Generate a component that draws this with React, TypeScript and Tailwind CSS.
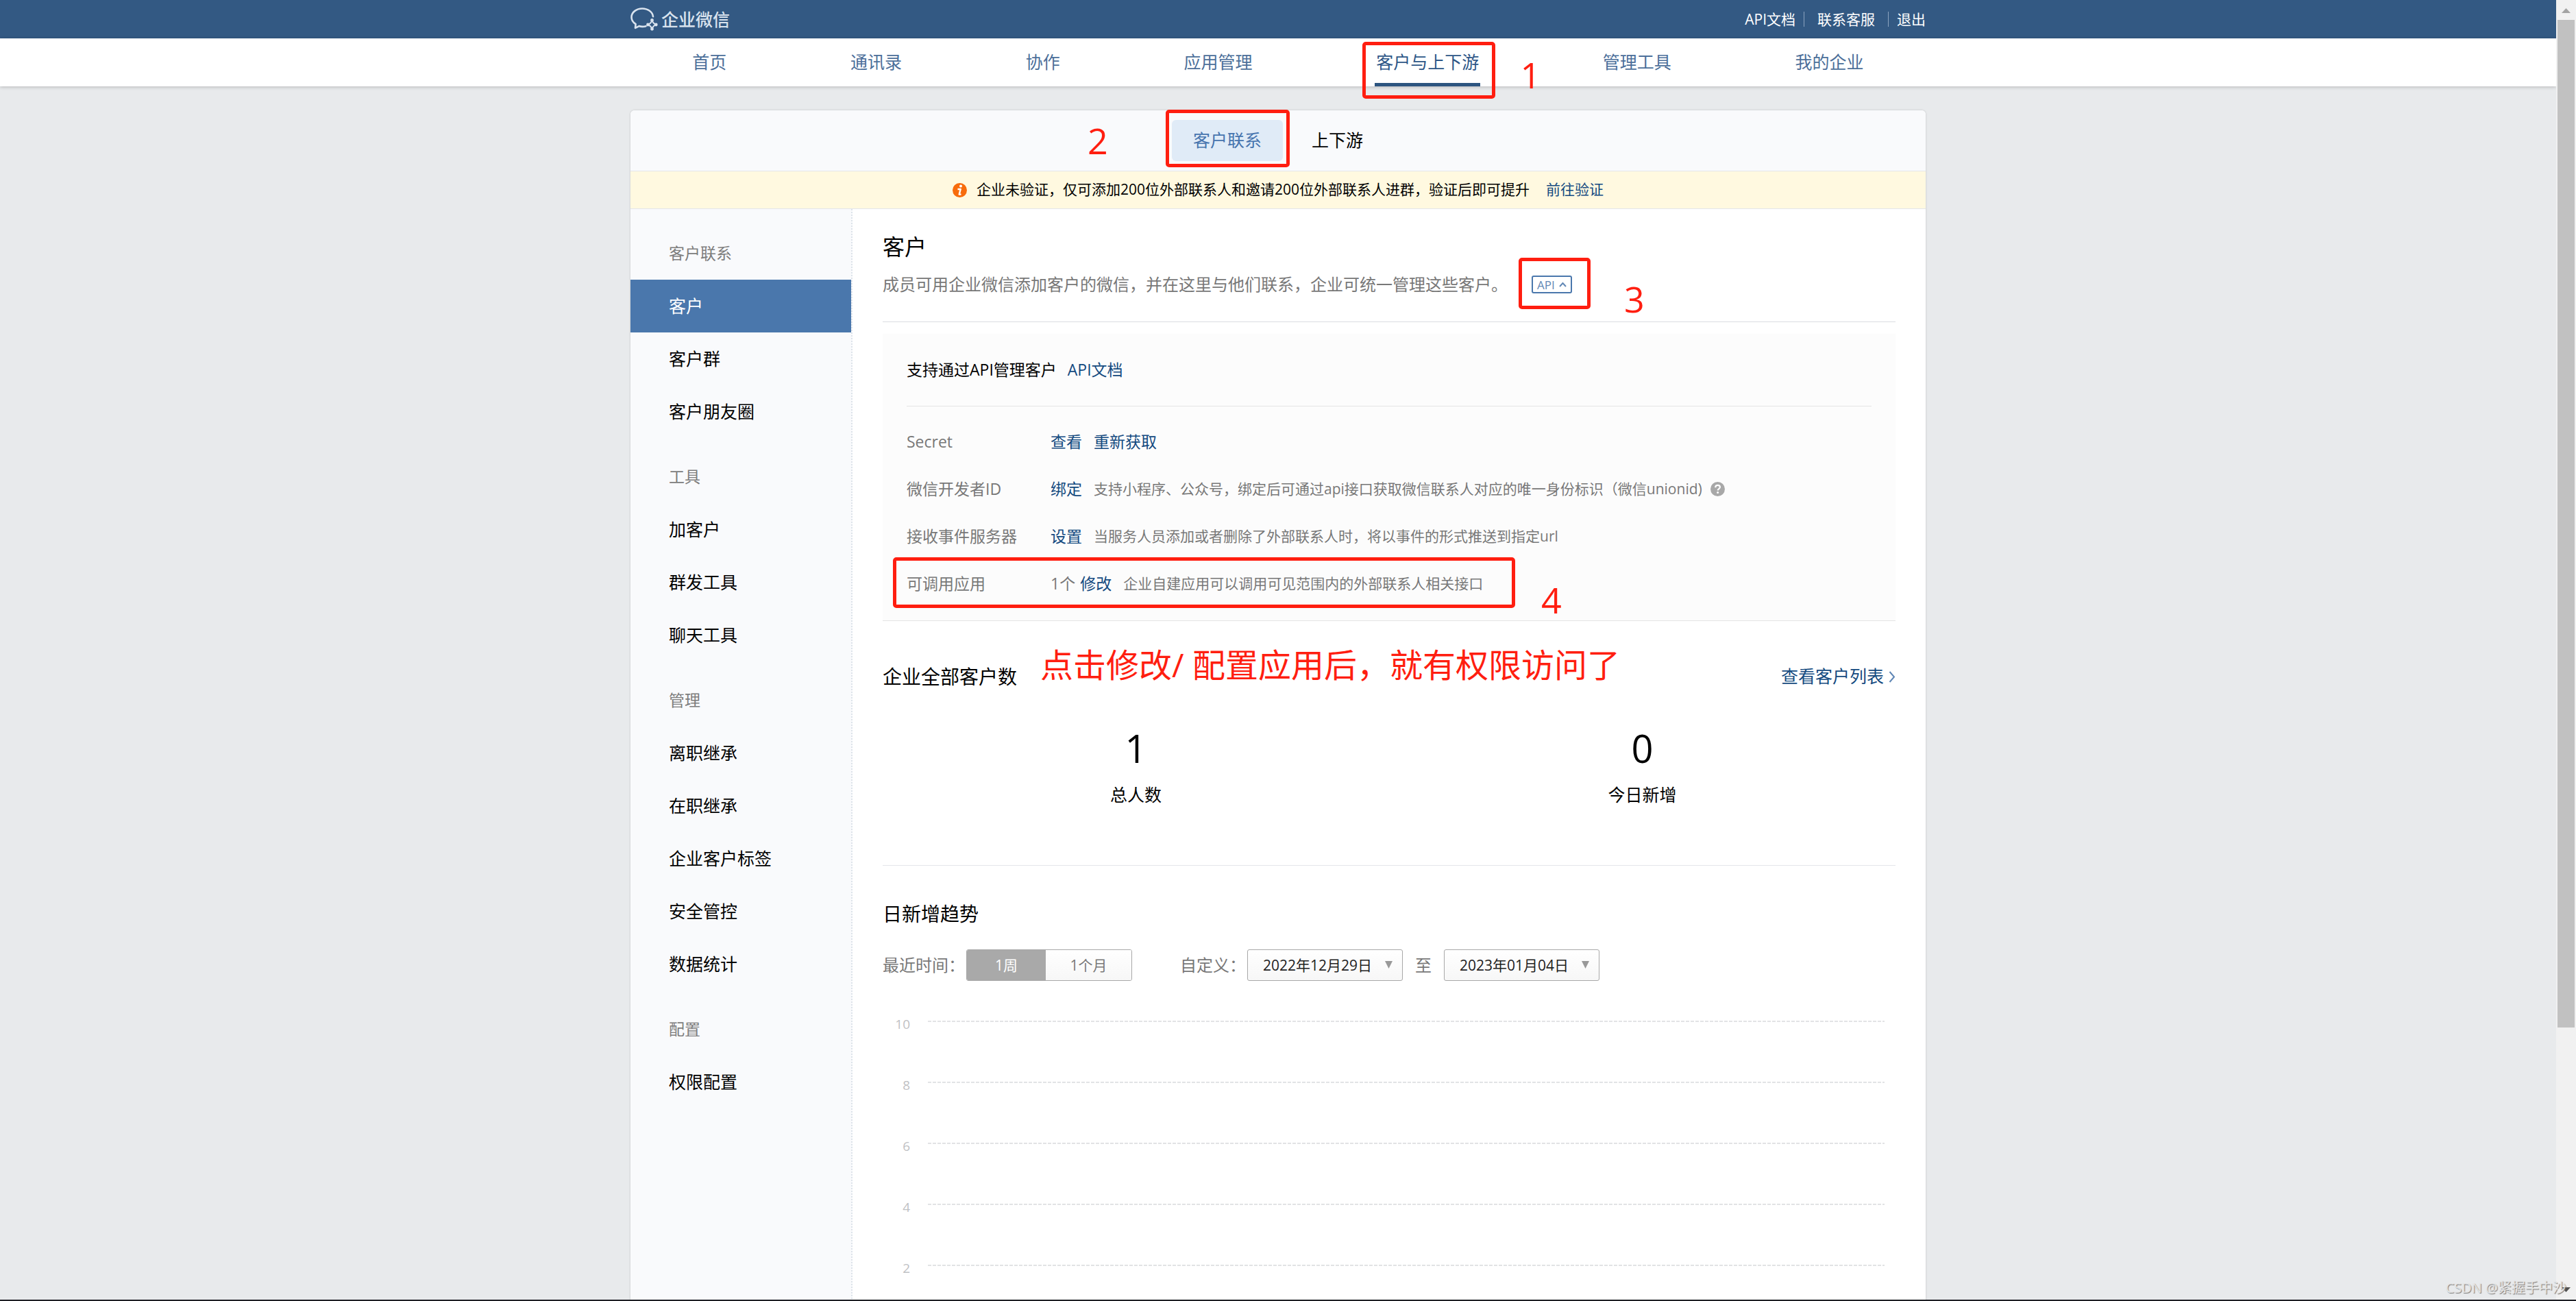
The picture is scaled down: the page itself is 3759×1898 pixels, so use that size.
// Customer contact admin page: top bar, main nav, side menu, API settings and trend chart.
import { useState, type ReactNode } from 'react';

const NAV = ['首页', '通讯录', '协作', '应用管理', '客户与上下游', '管理工具', '我的企业'];

const MENU = [
  { title: '客户联系', items: ['客户', '客户群', '客户朋友圈'] },
  { title: '工具', items: ['加客户', '群发工具', '聊天工具'] },
  { title: '管理', items: ['离职继承', '在职继承', '企业客户标签', '安全管控', '数据统计'] },
  { title: '配置', items: ['权限配置'] },
];

const STATS = [
  { value: 1, label: '总人数' },
  { value: 0, label: '今日新增' },
];

const TICKS = [10, 8, 6, 4, 2];
const TICK_GAP = 89;

function Logo() {
  return (
    <svg width="40" height="36" viewBox="0 0 40 36" fill="none" stroke="#d9e3ee" strokeLinecap="round" strokeLinejoin="round">
      <path d="M22.500 28.200c-3.500 1-7 .9-10-.1L7 30.800l.6-5.600C3.800 22.700 1.500 19 1.500 15 1.500 8 8.500 2.500 17.200 2.500c8.300 0 15 4.800 15.800 11.700" strokeWidth="2.600" />
      <path d="M31.500 19.500c.8 3 2.800 5.300 6 6.500-3.200 1-5.200 3.200-6 6.500-.9-3.200-2.900-5.400-6-6.500 3.100-1.200 5.100-3.400 6-6.500z" strokeWidth="2" />
      <g fill="#d9e3ee" stroke="none">
        <circle cx="31.500" cy="19.500" r="2.400" />
        <circle cx="37.300" cy="26" r="2.400" />
        <circle cx="31.500" cy="32.300" r="2.400" />
        <circle cx="25.500" cy="26" r="2.400" />
      </g>
    </svg>
  );
}

function InfoIcon() {
  return (
    <svg width="21" height="21" viewBox="0 0 21 21">
      <circle cx="10.500" cy="10.500" r="10.500" fill="#f76c0c" />
      <circle cx="12" cy="4.600" r="2" fill="#fff" />
      <path d="M7.500 9h4.200l-2 7.600h2.800" fill="none" stroke="#fff" strokeWidth="2.400" strokeLinejoin="round" />
    </svg>
  );
}

function HelpIcon() {
  return (
    <svg width="21" height="21" viewBox="0 0 21 21">
      <circle cx="10.500" cy="10.500" r="10.500" fill="#a8a8a8" />
      <path d="M7.200 8.200c0-2 1.500-3.300 3.400-3.300s3.300 1.200 3.300 2.900c0 2.200-3.200 2.400-3.200 4.700" fill="none" stroke="#fff" strokeWidth="2.200" />
      <circle cx="10.600" cy="15.600" r="1.500" fill="#fff" />
    </svg>
  );
}

// Red box drawn over a control, placed by its parent
function Mark({ className }: { className: string }) {
  return <span aria-hidden="true" className={`pointer-events-none absolute z-10 rounded-[5px] border-[5px] border-[#ff1e10] ${className}`} />;
}

function Step({ className, children }: { className: string; children: ReactNode }) {
  return <span className={`pointer-events-none absolute z-10 text-[52px] leading-[52px] text-[#ff1e10] ${className}`}>{children}</span>;
}

function Row({ label, children }: { label: string; children: ReactNode }) {
  return (
    <div className="relative flex h-[69px] items-center gap-[17px] text-[21px] text-[#787878]">
      <span className="-mr-[17px] w-[210px] text-[23px]">{label}</span>
      {children}
    </div>
  );
}

function RowLink({ children }: { children: ReactNode }) {
  return (
    <a href="#" className="text-[23px] text-[#144a80]">
      {children}
    </a>
  );
}

function DateSelect({ id, label, value }: { id: string; label: string; value: string }) {
  return (
    <div className="relative">
      <select id={id} aria-label={label} className="h-[46px] w-[227px] appearance-none rounded-[3px] border border-[#a8a8a8] bg-gradient-to-b from-white to-[#f7f7f7] pl-[22px] text-[21px] leading-none text-[#222]">
        <option>{value}</option>
      </select>
      <svg className="pointer-events-none absolute top-[17px] right-[15px]" width="11" height="11" viewBox="0 0 11 11" fill="#999">
        <path d="M0 0h11L5.500 11z" />
      </svg>
    </div>
  );
}

export default function App() {
  const [nav, setNav] = useState('客户与上下游');
  const [menu, setMenu] = useState('客户');
  const [range, setRange] = useState('1周');
  const [apiOpen, setApiOpen] = useState(true);

  return (
    <div className="flex h-screen flex-col bg-[#e8eaec] font-['Open_Sans','Noto_Sans_CJK_SC',sans-serif] text-black">
      <div className="flex min-h-0 flex-1">
        <div className="min-w-0 flex-1 overflow-hidden">
          {/* Top bar */}
          <div className="bg-[#335983]">
            <div className="mx-auto flex h-14 max-w-[1890px] items-center justify-between">
              <a href="#" className="flex items-center gap-[5px] text-[25px] leading-none font-medium text-[#d9e3ee]">
                <Logo />
                企业微信
              </a>
              <div className="flex items-center text-[21px] leading-none text-white">
                <a href="#">API文档</a>
                <span className="mr-[19px] ml-3 h-[22px] w-px bg-[#8ba3bf]" />
                <a href="#">联系客服</a>
                <span className="mr-3 ml-[19px] h-[22px] w-px bg-[#8ba3bf]" />
                <a href="#">退出</a>
              </div>
            </div>
          </div>

          {/* Main nav */}
          <nav className="bg-white shadow-[0_1px_5px_rgba(0,0,0,0.22)]">
            <div className="mx-auto flex h-[70px] max-w-[1890px] justify-around">
              {NAV.map((n) => (
                <div key={n} className="relative">
                  <button onClick={() => setNav(n)} className={`relative h-full text-[25px] ${n === nav ? 'text-[#2d5687]' : 'text-[#4c6f9a]'}`}>
                    {n}
                    {n === nav && <span className="absolute -inset-x-0.5 bottom-0 h-[5px] bg-[#2d5580]" />}
                  </button>
                  {n === '客户与上下游' && (
                    <>
                      <Mark className="top-[5px] -right-6 -bottom-[18px] -left-5" />
                      <Step className="top-[27px] -right-[90px]">1</Step>
                    </>
                  )}
                </div>
              ))}
            </div>
          </nav>

          <div className="mx-auto mt-[35px] max-w-[1890px] rounded-md bg-white shadow-[0_0_3px_rgba(0,0,0,0.18)]">
            <div className="flex items-center justify-center gap-[11px] rounded-t-md border-b border-[#e4e6ea] bg-[#f9fafc] py-[14px] text-[25px]">
              <div className="relative">
                <button className="h-[60px] rounded-md bg-[#e0ebf7] px-[31px] text-[#4674ae]">客户联系</button>
                <Mark className="-top-[15px] -right-[10px] -bottom-[9px] -left-[9px]" />
                <Step className="top-1 -left-[123px]">2</Step>
              </div>
              <button className="h-[60px] px-[31px]">上下游</button>
            </div>

            <div className="flex h-[55px] items-center justify-center border-b border-[#e4e6ea] bg-[#fff9e0] text-[21px]">
              <InfoIcon />
              <span className="mr-6 ml-[14px]">企业未验证，仅可添加200位外部联系人和邀请200位外部联系人进群，验证后即可提升</span>
              <a href="#" className="text-[#144a80]">前往验证</a>
            </div>

            <div className="flex">
              {/* Side menu */}
              <aside className="w-[324px] shrink-0 border-r-2 border-dotted border-[#dde3ea] bg-[#f9fafc] pt-2">
                {MENU.map((g) => (
                  <section key={g.title} className="pt-[18px]">
                    <h3 className="flex h-[77px] items-center pl-14 text-[23px] text-[#7d7d7d]">{g.title}</h3>
                    {g.items.map((item) => (
                      <button key={item} onClick={() => setMenu(item)} className={`flex h-[77px] w-full items-center pl-14 text-[25px] ${item === menu ? 'bg-[#4a77ac] text-white' : ''}`}>
                        {item}
                      </button>
                    ))}
                  </section>
                ))}
              </aside>

              <main className="min-w-0 flex-1 px-11">
                <header className="border-b border-[#dadde1] pt-[31px] pb-[33px]">
                  <h1 className="text-[32px] leading-[48px]">客户</h1>
                  <div className="mt-[10px] flex items-center gap-[35px] text-2xl leading-[42px] text-[#787878]">
                    成员可用企业微信添加客户的微信，并在这里与他们联系，企业可统一管理这些客户。
                    <div className="relative flex">
                      <button onClick={() => setApiOpen(!apiOpen)} className="flex h-[26px] items-center gap-[6px] rounded-[3px] border-2 border-[#4a77ac] px-[6px] text-[17px] leading-none text-[#6288b6]">
                        API
                        <svg width="11" height="8" viewBox="0 0 11 8" fill="none" stroke="#6288b6" strokeWidth="2">
                          <path d="M1 7l4.500-5L10 7" />
                        </svg>
                      </button>
                      <Mark className="-top-[26px] -right-[27px] -bottom-[23px] -left-[19px]" />
                      <Step className="top-2 -right-[106px]">3</Step>
                    </div>
                  </div>
                </header>

                {apiOpen && (
                  <section className="mt-[17px] border-b border-[#e4e4e4] bg-[#fcfcfc] px-[35px] pb-[19px]">
                    <div className="flex h-[106px] items-center gap-4 border-b border-[#e4e4e4] text-[23px]">
                      支持通过API管理客户
                      <RowLink>API文档</RowLink>
                    </div>
                    <div className="pt-[17px]">
                      <Row label="Secret">
                        <RowLink>查看</RowLink>
                        <RowLink>重新获取</RowLink>
                      </Row>
                      <Row label="微信开发者ID">
                        <RowLink>绑定</RowLink>
                        <span className="flex items-center gap-3">
                          支持小程序、公众号，绑定后可通过api接口获取微信联系人对应的唯一身份标识（微信unionid)
                          <HelpIcon />
                        </span>
                      </Row>
                      <Row label="接收事件服务器">
                        <RowLink>设置</RowLink>
                        当服务人员添加或者删除了外部联系人时，将以事件的形式推送到指定url
                      </Row>
                      <Row label="可调用应用">
                        <span className="-mr-[10px] text-[23px]">1个</span>
                        <RowLink>修改</RowLink>
                        企业自建应用可以调用可见范围内的外部联系人相关接口
                        <Mark className="-top-1 -left-5 h-[74px] w-[908px]" />
                        <Step className="top-8 left-[926px]">4</Step>
                      </Row>
                    </div>
                  </section>
                )}

                <section className="border-b border-[#e4e6ea]">
                  <div className="relative flex h-[162px] items-center justify-between">
                    <h2 className="text-[28px]">企业全部客户数</h2>
                    <p className="pointer-events-none absolute top-[28px] left-[230px] text-5xl leading-[72px] whitespace-nowrap text-[#ff1e10]">点击修改/ 配置应用后，就有权限访问了</p>
                    <a href="#" className="flex items-center gap-[7px] text-[25px] text-[#144a80]">
                      查看客户列表
                      <svg width="10" height="17" viewBox="0 0 10 17" fill="none" stroke="#5f86b5" strokeWidth="2">
                        <path d="M1.500 1l6.500 7.500L1.500 16" />
                      </svg>
                    </a>
                  </div>
                  <div className="grid grid-cols-2 pb-[86px] text-center">
                    {STATS.map((s) => (
                      <div key={s.label}>
                        <div className="text-[56px] leading-[46px]">{s.value}</div>
                        <div className="mt-7 text-[25px] leading-[34px]">{s.label}</div>
                      </div>
                    ))}
                  </div>
                </section>

                <section>
                  <h2 className="pt-[49px] text-[28px] leading-[42px]">日新增趋势</h2>
                  <div className="mt-[31px] flex items-center text-2xl text-[#787878]">
                    <span className="mr-[2px]">最近时间：</span>
                    <div className="mr-[70px] flex h-[46px] overflow-hidden rounded-[3px] border border-[#a8a8a8] text-[21px]">
                      {['1周', '1个月'].map((r) => (
                        <button key={r} onClick={() => setRange(r)} className={r === range ? 'w-[115px] bg-[#a9a9a9] text-white' : 'w-[125px] bg-gradient-to-b from-white to-[#f7f7f7]'}>
                          {r}
                        </button>
                      ))}
                    </div>
                    <label htmlFor="from" className="mr-[2px]">自定义：</label>
                    <DateSelect id="from" label="开始日期" value="2022年12月29日" />
                    <label htmlFor="to" className="mx-[18px]">至</label>
                    <DateSelect id="to" label="结束日期" value="2023年01月04日" />
                  </div>

                  <div className="mt-10 pr-4">
                    <svg width="100%" height="500" className="block">
                      {TICKS.map((t, i) => (
                        <g key={t}>
                          <text x="40" y={30 + i * TICK_GAP} textAnchor="end" fontSize="19" fill="#bfc1c4">
                            {t}
                          </text>
                          <line x1="66" x2="100%" y1={19 + i * TICK_GAP} y2={19 + i * TICK_GAP} stroke="#e2e3e5" strokeWidth="2" strokeDasharray="5 2" />
                        </g>
                      ))}
                    </svg>
                  </div>
                </section>
              </main>
            </div>
          </div>
        </div>

        {/* Page scrollbar */}
        <div className="relative flex w-[29px] shrink-0 flex-col items-center bg-[#f1f1f1]">
          <svg width="13" height="29" viewBox="0 0 13 29" fill="#a3a3a3" className="shrink-0">
            <path d="M0 19h13L6.500 12z" />
          </svg>
          <div className="w-[25px] flex-4 bg-[#c1c1c1]" />
          <div className="flex-1" />
          <svg width="13" height="29" viewBox="0 0 13 29" fill="#505050" className="shrink-0">
            <path d="M0 11h13L6.500 18z" />
          </svg>
          <span className="absolute right-[14px] bottom-[3px] text-[20px] leading-[28px] whitespace-nowrap text-[#e6e6e6] [text-shadow:1px_1px_1px_#777]">CSDN @紧握手中沙</span>
        </div>
      </div>
      <div className="h-[2px] bg-[#1e1f24]" />
    </div>
  );
}
